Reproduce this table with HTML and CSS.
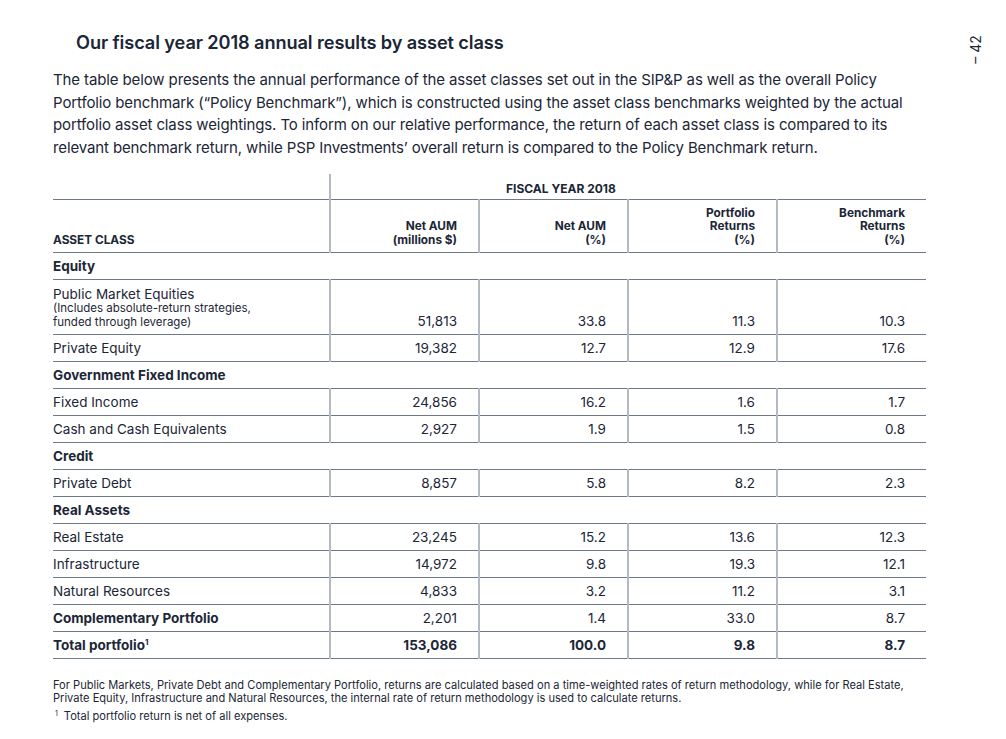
FILE: index.html
```html
<!DOCTYPE html>
<html>
<head>
<meta charset="utf-8">
<link rel="stylesheet" href="styles.css">
</head>
<body>
<div class="page">
  <div class="folio">– 42</div>
  <h1 class="title">Our fiscal year 2018 annual results by asset class</h1>
  <p class="intro">The table below presents the annual performance of the asset classes set out in the SIP&amp;P as well as the overall Policy Portfolio benchmark (“Policy Benchmark”), which is constructed using the asset class benchmarks weighted by the actual portfolio asset class weightings. To inform on our relative performance, the return of each asset class is compared to its relevant benchmark return, while PSP Investments’ overall return is compared to the Policy Benchmark return.</p>
  <table class="results">
    <colgroup>
      <col class="c-name"><col class="c-num"><col class="c-num"><col class="c-num"><col class="c-num">
    </colgroup>
    <thead>
      <tr class="fy-row">
        <th class="blank"></th>
        <th class="fy" colspan="4">FISCAL YEAR 2018</th>
      </tr>
      <tr class="head-row">
        <th class="name">ASSET CLASS</th>
        <th class="num">Net AUM<br>(millions $)</th>
        <th class="num">Net AUM<br>(%)</th>
        <th class="num">Portfolio<br>Returns<br>(%)</th>
        <th class="num">Benchmark<br>Returns<br>(%)</th>
      </tr>
    </thead>
    <tbody>
      <tr class="group"><td colspan="5">Equity</td></tr>
      <tr class="tall">
        <td class="name">Public Market Equities<span class="note">(Includes absolute-return strategies,<br>funded through leverage)</span></td>
        <td class="num">51,813</td><td class="num">33.8</td><td class="num">11.3</td><td class="num">10.3</td>
      </tr>
      <tr><td class="name">Private Equity</td><td class="num">19,382</td><td class="num">12.7</td><td class="num">12.9</td><td class="num">17.6</td></tr>
      <tr class="group"><td colspan="5">Government Fixed Income</td></tr>
      <tr><td class="name">Fixed Income</td><td class="num">24,856</td><td class="num">16.2</td><td class="num">1.6</td><td class="num">1.7</td></tr>
      <tr><td class="name">Cash and Cash Equivalents</td><td class="num">2,927</td><td class="num">1.9</td><td class="num">1.5</td><td class="num">0.8</td></tr>
      <tr class="group"><td colspan="5">Credit</td></tr>
      <tr><td class="name">Private Debt</td><td class="num">8,857</td><td class="num">5.8</td><td class="num">8.2</td><td class="num">2.3</td></tr>
      <tr class="group"><td colspan="5">Real Assets</td></tr>
      <tr><td class="name">Real Estate</td><td class="num">23,245</td><td class="num">15.2</td><td class="num">13.6</td><td class="num">12.3</td></tr>
      <tr><td class="name">Infrastructure</td><td class="num">14,972</td><td class="num">9.8</td><td class="num">19.3</td><td class="num">12.1</td></tr>
      <tr><td class="name">Natural Resources</td><td class="num">4,833</td><td class="num">3.2</td><td class="num">11.2</td><td class="num">3.1</td></tr>
      <tr class="strong-name"><td class="name">Complementary Portfolio</td><td class="num">2,201</td><td class="num">1.4</td><td class="num">33.0</td><td class="num">8.7</td></tr>
      <tr class="total"><td class="name">Total portfolio<sup>1</sup></td><td class="num">153,086</td><td class="num">100.0</td><td class="num">9.8</td><td class="num">8.7</td></tr>
    </tbody>
  </table>
  <p class="footnote">For Public Markets, Private Debt and Complementary Portfolio, returns are calculated based on a time-weighted rates of return methodology, while for Real Estate, Private Equity, Infrastructure and Natural Resources, the internal rate of return methodology is used to calculate returns.</p>
  <p class="footnote fn-ref"><sup>1</sup>Total portfolio return is net of all expenses.</p>
</div>
</body>
</html>
```

FILE: styles.css
```css
* { box-sizing: border-box; }
html, body { margin: 0; padding: 0; background: #ffffff; }
body {
  font-family: "Inter", "Liberation Sans", sans-serif;
  color: #1b2636;
}
.page {
  position: relative;
  width: 1006px;
  height: 739px;
  padding: 30px 0 0 53px;
}
.folio {
  position: absolute;
  left: 961px;
  top: 41px;
  font-size: 14px;
  transform: rotate(-90deg);
  white-space: nowrap;
  color: #1b2636;
}
.title {
  margin: 0 0 0 23px;
  font-size: 18.2px;
  font-weight: 600;
  line-height: 24px;
  letter-spacing: -0.1px;
}
.intro {
  margin: 15px 0 0 0;
  width: 850px;
  font-size: 15px;
  line-height: 22.7px;
  letter-spacing: -0.12px;
}
.results {
  margin-top: 14px;
  border-collapse: collapse;
  table-layout: fixed;
  width: 873px;
  font-size: 13px;
}
.c-name { width: 277px; }
.c-num { width: 149px; }
.results th, .results td {
  padding: 0;
  font-weight: normal;
}
.results .fy-row th { height: 26px; border-bottom: 1px solid #6d7987; }
.results .fy-row .fy {
  border-left: 2px solid #b3bac3;
  font-size: 12px;
  font-weight: 700;
  text-align: left;
  padding: 3px 0 0 175px;
  vertical-align: middle;
}
.results .head-row th {
  height: 53px;
  vertical-align: bottom;
  font-size: 11.8px;
  font-weight: 700;
  line-height: 13.5px;
  padding-bottom: 5px;
  border-bottom: 1px solid #6d7987;
}
.results .head-row th.name { text-align: left; }
.results .head-row th.num {
  text-align: right;
  padding-right: 21px;
  border-left: 2px solid #b3bac3;
}
.results tbody td {
  height: 27px;
  border-bottom: 1px solid #6d7987;
  vertical-align: middle;
  line-height: 16px;
}
.results td.num {
  text-align: right;
  padding-right: 21px;
  border-left: 2px solid #b3bac3;
  font-size: 13.5px;
}
.results td.name { font-size: 13.5px; }
.results .group td { font-weight: 700; font-size: 13.5px; }
.results .tall td { height: 55px; vertical-align: bottom; padding-bottom: 5px; }
.results .tall td.name { line-height: 14px; }
.results .tall .note { display: block; font-size: 11.5px; line-height: 14px; }
.results .strong-name td.name { font-weight: 700; }
.results .total td { font-weight: 700; }
.total sup { font-size: 8px; vertical-align: 5px; line-height: 0; }
.footnote {
  margin: 20px 0 0 0;
  width: 880px;
  font-size: 11.1px;
  line-height: 13px;
}
.footnote.fn-ref { margin-top: 5px; }
.fn-ref sup { font-size: 7px; vertical-align: 4px; line-height: 0; margin-right: 6px; margin-left: 2px; }
```
